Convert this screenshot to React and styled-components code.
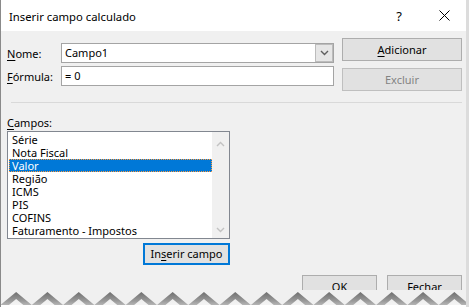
import styled, { createGlobalStyle } from "styled-components";

const GlobalStyle = createGlobalStyle`
  html, body {
    margin: 0;
    padding: 0;
    background: #dcdcdc;
  }
  body {
    font-family: "Noto Sans", "Segoe UI", sans-serif;
    font-size: 11px;
    color: #000;
  }
  * { box-sizing: border-box; }
`;

const fields = [
  "Série",
  "Nota Fiscal",
  "Valor",
  "Região",
  "ICMS",
  "PIS",
  "COFINS",
  "Faturamento - Impostos",
];

const Chevron = ({ up, color = "#c2c2c2" }) => (
  <svg width="9" height="6" viewBox="0 0 9 6">
    <polyline
      points={up ? "1,5 4.5,1.5 8,5" : "1,1 4.5,4.5 8,1"}
      fill="none"
      stroke={color}
      strokeWidth="1.4"
    />
  </svg>
);

// zigzag shadow of the cut-off screenshot
const TornEdge = () => {
  const period = 31.3;
  const teeth = (dy) => {
    const pts = [];
    for (let k = -1; k < 17; k++) {
      const vx = k * period - 0.5;
      pts.push(`${vx},${15 + dy}`);
      pts.push(`${vx + period / 2},${2 + dy}`);
    }
    return `-40,20 ${pts.join(" ")} 520,20`;
  };
  return (
    <EdgeWrap>
      <svg width="469" height="17" viewBox="0 0 469 17">
        <defs>
          <linearGradient id="shade" x1="0" y1="0" x2="0" y2="1">
            <stop offset="0" stopColor="#6f6f6f" />
            <stop offset="0.5" stopColor="#9a9a9a" />
            <stop offset="1" stopColor="#d8d8d8" />
          </linearGradient>
        </defs>
        <rect x="0" y="0" width="469" height="17" fill="#f0f0f0" />
        <polygon points={teeth(0)} fill="url(#shade)" />
        <polygon points={teeth(7)} fill="#ffffff" opacity="0.85" />
        <rect x="0" y="15" width="469" height="2" fill="#ffffff" />
      </svg>
    </EdgeWrap>
  );
};

export default function App() {
  return (
    <>
      <GlobalStyle />
      <Window>
        <TitleBar>
          <Title>Inserir campo calculado</Title>
          <HelpButton>?</HelpButton>
          <CloseButton>
            <svg width="11" height="11" viewBox="0 0 11 11">
              <path d="M0.5 0.5 L10.5 10.5 M10.5 0.5 L0.5 10.5" stroke="#000" strokeWidth="1" />
            </svg>
          </CloseButton>
        </TitleBar>
        <Body>
          <TopSection>
            <Fields>
              <FieldRow>
                <Label>
                  <u>N</u>ome:
                </Label>
                <Combo>
                  <ComboText>Campo1</ComboText>
                  <DropButton>
                    <Chevron color="#5f5f5f" />
                  </DropButton>
                </Combo>
              </FieldRow>
              <FieldRow>
                <Label>
                  <u>F</u>órmula:
                </Label>
                <TextBox>= 0</TextBox>
              </FieldRow>
            </Fields>
            <SideButtons>
              <Button $width={120}>
                <u>A</u>dicionar
              </Button>
              <Button $width={120} $disabled>
                Excluir
              </Button>
            </SideButtons>
          </TopSection>
          <Separator />
          <SectionLabel>
            <u>C</u>ampos:
          </SectionLabel>
          <ListBox>
            <Items>
              {fields.map((f) => (
                <Item key={f} $selected={f === "Valor"}>
                  {f}
                </Item>
              ))}
            </Items>
            <ScrollBar>
              <Chevron up />
              <Chevron />
            </ScrollBar>
          </ListBox>
          <InsertRow>
            <Button $width={87} $height={22} $focused>
              In<u>s</u>erir campo
            </Button>
          </InsertRow>
          <Footer>
            <Button $width={75}>OK</Button>
            <Button $width={75}>Fechar</Button>
          </Footer>
        </Body>
        <TornEdge />
      </Window>
    </>
  );
}

const Window = styled.div`
  position: relative;
  width: 466px;
  height: 307px;
  overflow: hidden;
  background: #f0f0f0;
  border-left: 1px solid #8a8a8a;
`;

const TitleBar = styled.div`
  display: flex;
  align-items: center;
  height: 31px;
  background: #ffffff;
  padding-left: 8px;
  font-size: 11px;
`;

const Title = styled.div`
  flex: 1;
  padding-top: 1px;
  font-size: 11.3px;
`;

const HelpButton = styled.div`
  width: 46px;
  text-align: center;
  font-size: 13px;
  padding-top: 1px;
`;

const CloseButton = styled.div`
  width: 44px;
  display: flex;
  justify-content: center;
  align-items: center;
`;

const Body = styled.div`
  padding: 7px 4px 0 6px;
  display: flex;
  flex-direction: column;
`;

const TopSection = styled.div`
  display: flex;
  gap: 8px;
`;

const Fields = styled.div`
  display: flex;
  flex-direction: column;
  gap: 3px;
  margin-top: 5px;
`;

const FieldRow = styled.div`
  display: grid;
  grid-template-columns: 54px 273px;
  height: 20px;
  align-items: center;
  line-height: 15px;
`;

const Label = styled.div`
  u {
    text-underline-offset: 2px;
  }
`;

const Combo = styled.div`
  display: flex;
  height: 20px;
  border: 1px solid #a4a4a4;
  background: #ffffff;
`;

const ComboText = styled.div`
  flex: 1;
  padding-left: 3px;
  line-height: 18px;
`;

const DropButton = styled.div`
  width: 18px;
  display: flex;
  align-items: center;
  justify-content: center;
  background: #e6e6e6;
  box-shadow: inset 0 0 0 1px #bcbcbc;
`;

const TextBox = styled.div`
  height: 20px;
  border: 1px solid #a4a4a4;
  background: #ffffff;
  padding-left: 3px;
  line-height: 18px;
`;

const SideButtons = styled.div`
  display: flex;
  flex-direction: column;
  gap: 7px;
`;

const Button = styled.div`
  width: ${(p) => p.$width}px;
  height: ${(p) => p.$height || 23}px;
  display: flex;
  align-items: center;
  justify-content: center;
  background: #e1e1e1;
  border: ${(p) =>
    p.$focused ? "2px solid #0078d7" : p.$disabled ? "1px solid #bfbfbf" : "1px solid #adadad"};
  color: ${(p) => (p.$disabled ? "#838383" : "#000")};
  line-height: 15px;
  padding-bottom: 1px;
  u {
    text-underline-offset: 2px;
  }
`;

const Separator = styled.div`
  height: 1px;
  margin: 11px 0 0 4px;
  background: #d9d9d9;
`;

const SectionLabel = styled.div`
  margin-top: 12px;
  line-height: 15px;
  u {
    text-underline-offset: 2px;
  }
`;

const ListBox = styled.div`
  display: flex;
  width: 223px;
  height: 108px;
  margin-top: 1px;
  border: 1px solid #828790;
  background: #ffffff;
`;

const Items = styled.div`
  width: 204px;
  padding-top: 1px;
`;

const Item = styled.div`
  height: 13px;
  line-height: 13px;
  margin-left: 1px;
  padding-left: 2px;
  border: 1px dotted ${(p) => (p.$selected ? "#ff9a3c" : "transparent")};
  background: ${(p) => (p.$selected ? "#0078d7" : "transparent")};
  color: ${(p) => (p.$selected ? "#ffffff" : "#000")};
  white-space: nowrap;
  display: flex;
  align-items: center;
`;

const ScrollBar = styled.div`
  width: 17px;
  background: #f0f0f0;
  display: flex;
  flex-direction: column;
  justify-content: space-between;
  align-items: center;
  padding: 9px 0 5px;
`;

const InsertRow = styled.div`
  width: 223px;
  display: flex;
  justify-content: flex-end;
  margin-top: 4px;
`;

const Footer = styled.div`
  display: flex;
  justify-content: flex-end;
  gap: 10px;
  margin-top: 10px;
`;

const EdgeWrap = styled.div`
  position: absolute;
  left: 0;
  bottom: 0;
  height: 17px;
  line-height: 0;
`;
